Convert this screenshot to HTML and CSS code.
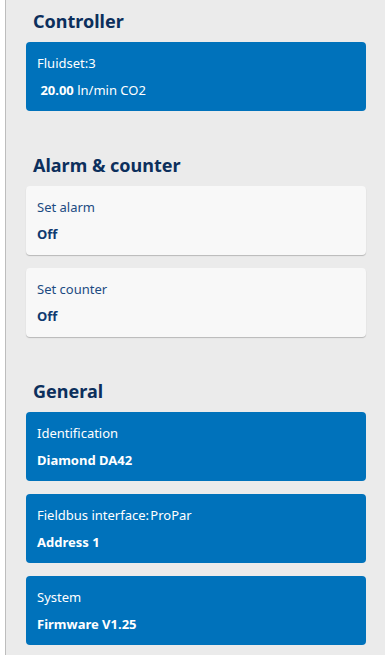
FILE: index.html
```html
<!DOCTYPE html>
<html>
<head>
<meta charset="utf-8">
<link rel="stylesheet" href="styles.css">
</head>
<body>
<div class="page">
  <main class="panel">
    <section class="section">
      <h2 class="heading">Controller</h2>
      <div class="cards">
        <div class="card card-blue">
          <div class="label">Fluidset:3</div>
          <div class="value">&nbsp;<b>20.00</b> <span class="unit">ln/min CO2</span></div>
        </div>
      </div>
    </section>
    <section class="section">
      <h2 class="heading">Alarm &amp; counter</h2>
      <div class="cards">
        <div class="card card-light">
          <div class="label">Set alarm</div>
          <div class="value"><b>Off</b></div>
        </div>
        <div class="card card-light">
          <div class="label">Set counter</div>
          <div class="value"><b>Off</b></div>
        </div>
      </div>
    </section>
    <section class="section">
      <h2 class="heading">General</h2>
      <div class="cards">
        <div class="card card-blue">
          <div class="label">Identification</div>
          <div class="value"><b>Diamond DA42</b></div>
        </div>
        <div class="card card-blue">
          <div class="label">Fieldbus interface:&#8202;ProPar</div>
          <div class="value"><b>Address 1</b></div>
        </div>
        <div class="card card-blue">
          <div class="label">System</div>
          <div class="value"><b>Firmware V1.25</b></div>
        </div>
      </div>
    </section>
  </main>
</div>
</body>
</html>
```
FILE: styles.css
```css
html, body {
  margin: 0;
  padding: 0;
  height: 100%;
}
body {
  background: #ffffff;
  font-family: "Noto Sans", "Open Sans", sans-serif;
}
.page {
  height: 100%;
  padding-left: 5px;
  box-sizing: border-box;
}
.panel {
  height: 100%;
  box-sizing: border-box;
  background: #ebebeb;
  border-left: 1px solid #bdbdbd;
  padding: 9px 19px 0 20px;
  display: flex;
  flex-direction: column;
  gap: 42px;
}
.heading {
  margin: 0 0 9px 7px;
  font-size: 18px;
  line-height: 24px;
  font-weight: 700;
  color: #0c2f5c;
}
.cards {
  display: flex;
  flex-direction: column;
  gap: 13px;
}
.card {
  height: 69px;
  box-sizing: border-box;
  border-radius: 4px;
  padding: 12px 11px 0;
  display: flex;
  flex-direction: column;
  gap: 9px;
  font-size: 13px;
  line-height: 18px;
}
.card-blue {
  background: #0072bb;
  color: #ffffff;
}
.card-light {
  background: #f8f8f8;
  box-shadow: 0 1px 1px rgba(0, 0, 0, 0.22);
  color: #1c4b82;
}
.card-light .value {
  color: #0f3a70;
}
.label {
  letter-spacing: 0;
}
.value b {
  font-weight: 700;
}
.unit {
  font-weight: 400;
}
```
